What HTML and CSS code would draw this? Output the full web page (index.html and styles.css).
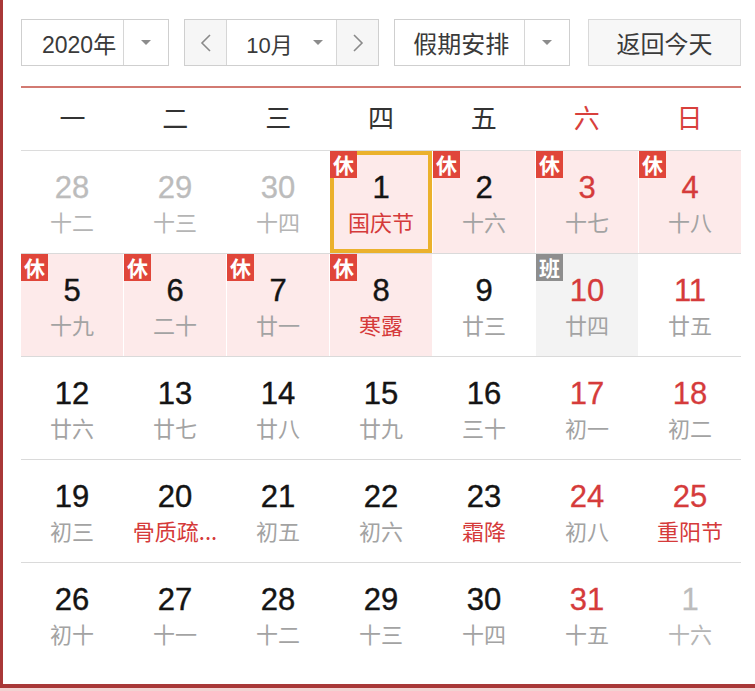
FILE: index.html
```html
<!DOCTYPE html>
<html lang="zh-CN">
<head>
<meta charset="utf-8">
<title>万年历</title>
<link rel="stylesheet" href="styles.css">
</head>
<body>
<div class="frame">
  <div class="toolbar">
    <div class="select year">
      <span class="label">2020年</span>
      <span class="arrow"><i class="tri"></i></span>
    </div>
    <div class="month-group">
      <span class="nav"><svg width="12" height="20" viewBox="0 0 12 20"><polyline points="10,2 2,10 10,18" fill="none" stroke="#8a8a8a" stroke-width="1.6"/></svg></span>
      <span class="month"><span>10月</span><i class="tri"></i></span>
      <span class="nav"><svg width="12" height="20" viewBox="0 0 12 20"><polyline points="2,2 10,10 2,18" fill="none" stroke="#8a8a8a" stroke-width="1.6"/></svg></span>
    </div>
    <div class="select holiday">
      <span class="label">假期安排</span>
      <span class="arrow"><i class="tri"></i></span>
    </div>
    <div class="today">返回今天</div>
  </div>

  <div class="weekdays">
    <span>一</span><span>二</span><span>三</span><span>四</span><span>五</span><span class="red">六</span><span class="red">日</span>
  </div>

  <div class="week">
    <div class="cell other"><b>28</b><i>十二</i></div>
    <div class="cell other"><b>29</b><i>十三</i></div>
    <div class="cell other"><b>30</b><i>十四</i></div>
    <div class="cell rest selected"><span class="badge">休</span><b>1</b><i class="fest">国庆节</i></div>
    <div class="cell rest"><span class="badge">休</span><b>2</b><i>十六</i></div>
    <div class="cell rest weekend"><span class="badge">休</span><b>3</b><i>十七</i></div>
    <div class="cell rest weekend"><span class="badge">休</span><b>4</b><i>十八</i></div>
  </div>

  <div class="week">
    <div class="cell rest"><span class="badge">休</span><b>5</b><i>十九</i></div>
    <div class="cell rest"><span class="badge">休</span><b>6</b><i>二十</i></div>
    <div class="cell rest"><span class="badge">休</span><b>7</b><i>廿一</i></div>
    <div class="cell rest"><span class="badge">休</span><b>8</b><i class="fest">寒露</i></div>
    <div class="cell"><b>9</b><i>廿三</i></div>
    <div class="cell work weekend"><span class="badge gray">班</span><b>10</b><i>廿四</i></div>
    <div class="cell weekend"><b>11</b><i>廿五</i></div>
  </div>

  <div class="week">
    <div class="cell"><b>12</b><i>廿六</i></div>
    <div class="cell"><b>13</b><i>廿七</i></div>
    <div class="cell"><b>14</b><i>廿八</i></div>
    <div class="cell"><b>15</b><i>廿九</i></div>
    <div class="cell"><b>16</b><i>三十</i></div>
    <div class="cell weekend"><b>17</b><i>初一</i></div>
    <div class="cell weekend"><b>18</b><i>初二</i></div>
  </div>

  <div class="week">
    <div class="cell"><b>19</b><i>初三</i></div>
    <div class="cell"><b>20</b><i class="fest">骨质疏...</i></div>
    <div class="cell"><b>21</b><i>初五</i></div>
    <div class="cell"><b>22</b><i>初六</i></div>
    <div class="cell"><b>23</b><i class="fest">霜降</i></div>
    <div class="cell weekend"><b>24</b><i>初八</i></div>
    <div class="cell weekend"><b>25</b><i class="fest">重阳节</i></div>
  </div>

  <div class="week last">
    <div class="cell"><b>26</b><i>初十</i></div>
    <div class="cell"><b>27</b><i>十一</i></div>
    <div class="cell"><b>28</b><i>十二</i></div>
    <div class="cell"><b>29</b><i>十三</i></div>
    <div class="cell"><b>30</b><i>十四</i></div>
    <div class="cell weekend"><b>31</b><i>十五</i></div>
    <div class="cell other"><b>1</b><i>十六</i></div>
  </div>
</div>
</body>
</html>
```

FILE: styles.css
```css
* { box-sizing: border-box; }

html, body {
  margin: 0;
  padding: 0;
}

body {
  width: 755px;
  height: 691px;
  overflow: hidden;
  background: #f3d2d2;
  font-family: "Noto Sans CJK SC", "Liberation Sans", sans-serif;
}

.frame {
  width: 755px;
  height: 688px;
  background: #fff;
  border-left: 3px solid #a93838;
  border-bottom: 4px solid #a93838;
  padding: 19px 14px 0 18px;
}

/* toolbar */
.toolbar {
  display: flex;
  height: 47px;
  width: 720px;
}

.select {
  display: flex;
  height: 47px;
  border: 1px solid #cfcfcf;
  background: #fff;
  color: #3a3a3a;
  font-size: 24px;
}

.select .label {
  display: flex;
  align-items: center;
  border-right: 1px solid #d6d6d6;
}

.select .arrow {
  width: 45px;
  display: flex;
  align-items: center;
  justify-content: center;
}

.year { width: 148px; }
.year .label {
  width: 103px;
  padding-left: 20px;
  font-size: 23px;
  font-family: "Liberation Sans", "Noto Sans CJK SC", sans-serif;
}

.holiday { width: 176px; margin-left: 15px; }
.holiday .label {
  width: 131px;
  justify-content: center;
  padding-left: 4px;
}

.tri {
  display: block;
  width: 0;
  height: 0;
  border-left: 5px solid transparent;
  border-right: 5px solid transparent;
  border-top: 5px solid #8c8c8c;
}

.month-group {
  display: flex;
  width: 195px;
  height: 47px;
  margin-left: 15px;
  border: 1px solid #cfcfcf;
}

.nav {
  width: 41px;
  background: #f6f6f6;
  display: flex;
  align-items: center;
  justify-content: center;
}

.month {
  flex: 1;
  border-left: 1px solid #d6d6d6;
  border-right: 1px solid #d6d6d6;
  display: flex;
  align-items: center;
  justify-content: center;
  gap: 20px;
  padding-left: 6px;
  font-size: 22px;
  color: #3a3a3a;
  font-family: "Liberation Sans", "Noto Sans CJK SC", sans-serif;
}

.today {
  margin-left: 18px;
  width: 153px;
  height: 47px;
  border: 1px solid #d9d9d9;
  background: #f7f7f7;
  color: #3a3a3a;
  font-size: 24px;
  display: flex;
  align-items: center;
  justify-content: center;
}

/* weekday header */
.weekdays {
  margin-top: 20px;
  width: 720px;
  border-top: 2px solid #d27a72;
  border-bottom: 1px solid #dcdcdc;
  display: grid;
  grid-template-columns: repeat(7, 1fr);
  height: 65px;
  line-height: 58px;
  text-align: center;
  font-size: 26px;
  color: #333;
}

.weekdays .red { color: #d8403c; }

/* weeks */
.week {
  width: 720px;
  height: 103px;
  display: grid;
  grid-template-columns: repeat(7, 1fr);
  column-gap: 1px;
  border-bottom: 1px solid #dadada;
}

.week.last { border-bottom: none; }

.cell {
  position: relative;
  display: flex;
  flex-direction: column;
  align-items: center;
  padding-top: 22px;
}

.cell b {
  display: block;
  font-family: "Liberation Sans", Arial, sans-serif;
  font-weight: normal;
  font-size: 31px;
  line-height: 30px;
  color: #141414;
  -webkit-text-stroke: 0.4px #141414;
}

.cell i {
  display: block;
  font-style: normal;
  margin-top: 5px;
  font-size: 22px;
  line-height: 26px;
  color: #a3a3a3;
  white-space: nowrap;
}

.cell i.fest { color: #d53a3a; }

.cell.weekend b { color: #d53b3b; -webkit-text-stroke: 0.3px #d53b3b; }
.cell.other b { color: #bcbcbc; -webkit-text-stroke: 0.3px #bcbcbc; }
.cell.other i { color: #b5b5b5; }

.cell.rest { background: #fdeaea; }
.cell.work { background: #f3f3f3; }

.cell.selected {
  box-shadow: inset 0 0 0 4px #ebb12c;
}

.badge {
  position: absolute;
  top: 0;
  left: 0;
  width: 27px;
  height: 27px;
  background: #e0463a;
  color: #fff;
  font-size: 21px;
  font-weight: bold;
  line-height: 27px;
  text-align: center;
}

.badge.gray { background: #8e8e8e; }
```
